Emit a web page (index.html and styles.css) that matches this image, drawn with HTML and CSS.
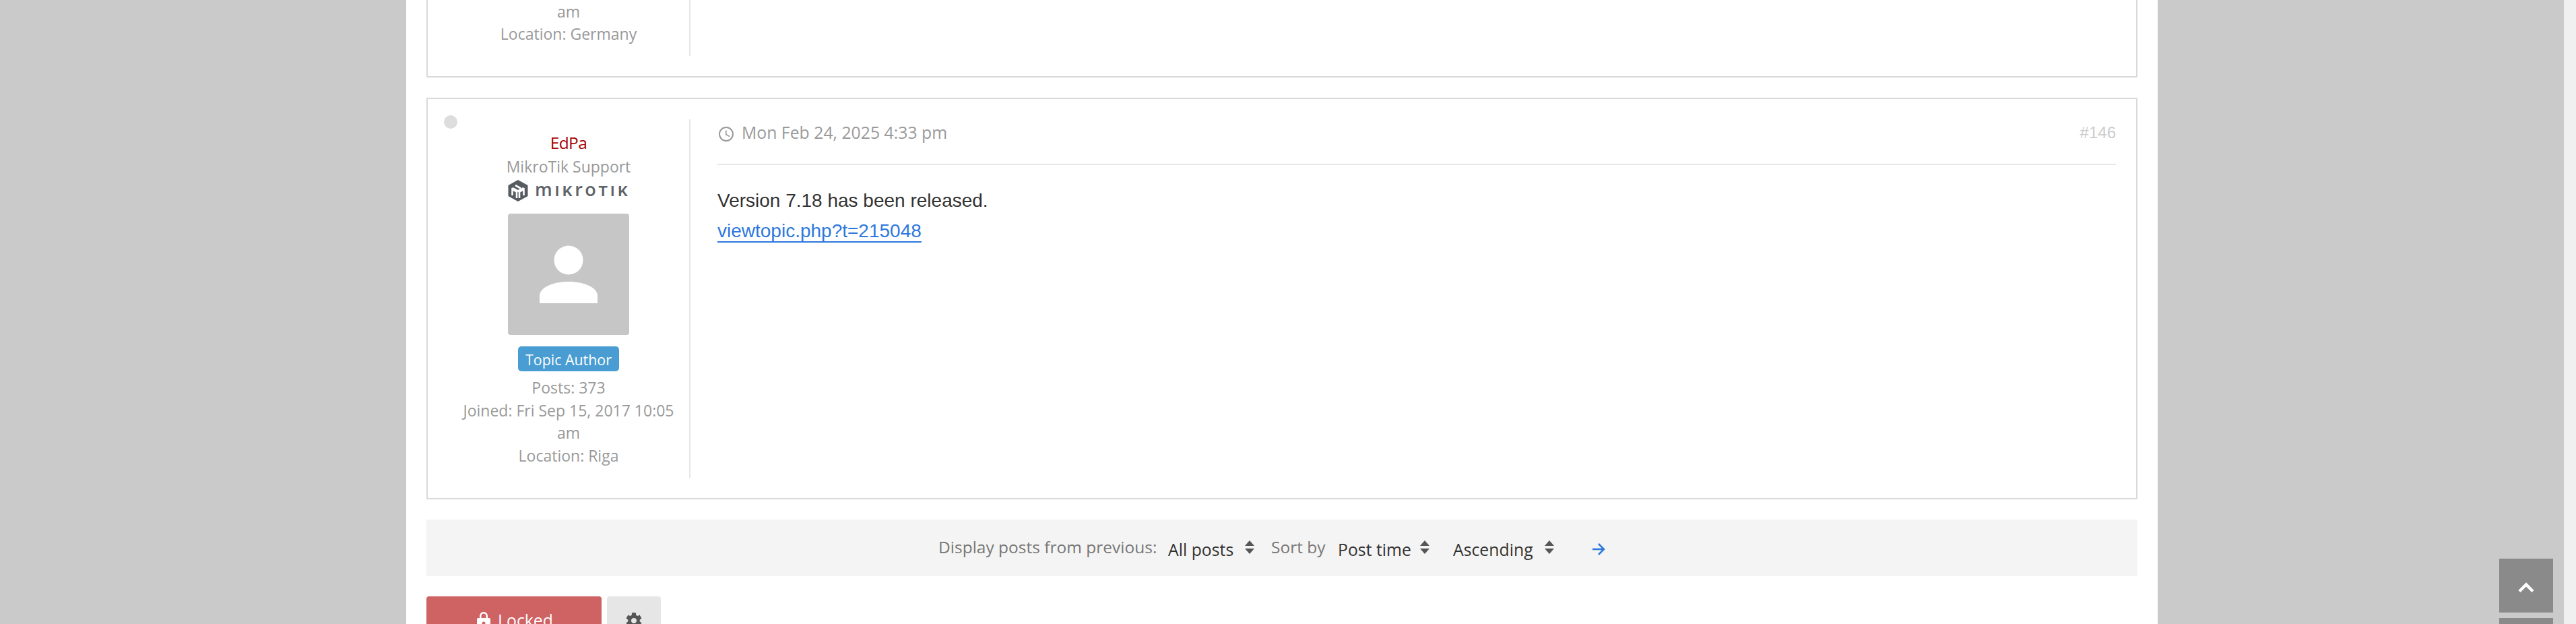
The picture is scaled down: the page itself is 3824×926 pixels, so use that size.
FILE: index.html
```html
<!DOCTYPE html>
<html lang="en">
<head>
    <meta charset="utf-8">
    <title>MikroTik community forum</title>
    <link rel="stylesheet" href="styles.css">
</head>
<body>
<div class="page">
    <div class="wrap">

        <div class="post post-prev">
            <div class="profile">
                <div>am</div>
                <div>Location: Germany</div>
            </div>
        </div>

        <div class="post">
            <span class="status"></span>
            <div class="profile">
                <a class="username">EdPa</a>
                <div class="rank">MikroTik Support</div>
                <div class="logo">
                    <svg width="30" height="32" viewBox="0 0 30 32">
                        <path fill="#555b60" d="M15 0L29.500 8V24L15 32L0.500 24V8Z"/>
                        <path fill="none" stroke="#fff" stroke-width="2.600" d="M6.500 23V14L13 17.500V27M17 27V17.500L23.500 14V23M6.500 12L15 16.500L23.500 12M11 8L19 12.500"/>
                    </svg>
                    <span class="logo-text"><span>m</span><span>ı</span><span>ĸ</span><span>r</span><span>o</span><span>т</span><span>ı</span><span>ĸ</span></span>
                </div>
                <div class="avatar">
                    <svg width="180" height="180" viewBox="0 0 180 180" fill="#fff">
                        <circle cx="90" cy="69" r="21.500"/>
                        <path d="M47 133V122C47 110 66 101 90 101S133 110 133 122V133Z"/>
                    </svg>
                </div>
                <div class="badge">Topic Author</div>
                <div>Posts: 373</div>
                <div>Joined: Fri Sep 15, 2017 10:05 am</div>
                <div>Location: Riga</div>
            </div>
            <div class="postbody">
                <div class="post-head">
                    <svg class="clock" width="24" height="24" viewBox="0 0 24 24" fill="none" stroke="#999" stroke-width="2">
                        <circle cx="12" cy="12" r="10"/>
                        <path stroke-width="1.600" d="M11.800 6.500V12.500L17 15.500"/>
                    </svg>
                    <span>Mon Feb 24, 2025 4:33 pm</span>
                    <a class="number">#146</a>
                </div>
                <div class="content">
                    Version 7.18 has been released.<br>
                    <a>viewtopic.php?t=215048</a>
                </div>
            </div>
        </div>

        <form class="sortbar">
            <label class="l-display">Display posts from previous:</label>
            <span class="select s-all">All posts</span>
            <svg class="caret" width="14" height="20" viewBox="0 0 14 20"><path d="M0 8L7 0L14 8ZM0 12L7 20L14 12Z"/></svg>
            <label class="l-sort">Sort by</label>
            <span class="select s-time">Post time</span>
            <svg class="caret" width="14" height="20" viewBox="0 0 14 20"><path d="M0 8L7 0L14 8ZM0 12L7 20L14 12Z"/></svg>
            <span class="select s-dir">Ascending</span>
            <svg class="caret" width="14" height="20" viewBox="0 0 14 20"><path d="M0 8L7 0L14 8ZM0 12L7 20L14 12Z"/></svg>
            <svg class="go" width="20" height="20" viewBox="0 0 20 20"><path d="M1 10H18M10 2L18 10L10 18"/></svg>
        </form>

        <div class="actions">
            <a class="button locked">
                <svg width="20" height="27" viewBox="0 0 20 27"><path fill="#fff" fill-rule="evenodd" d="M2 9H4V6A6 6 0 0 1 16 6V9H18A2 2 0 0 1 20 11V24A2 2 0 0 1 18 26H2A2 2 0 0 1 0 24V11A2 2 0 0 1 2 9ZM6.500 9H13.500V6A3.500 3.500 0 0 0 6.500 6ZM10 14.500A2.500 2.500 0 1 0 10 19.500A2.500 2.500 0 1 0 10 14.500Z"/></svg>
                <span>Locked</span>
            </a>
            <a class="button tools">
                <svg width="28" height="28" viewBox="0 0 24 24"><path fill="#555" d="M19.430 12.980c.04-.32.070-.640.070-.980s-.030-.660-.070-.980l2.110-1.650c.190-.150.240-.420.120-.640l-2-3.460c-.120-.220-.390-.300-.610-.220l-2.490 1c-.520-.400-1.080-.730-1.690-.980l-.380-2.650C14.460 2.180 14.250 2 14 2h-4c-.250 0-.460.180-.490.420l-.380 2.650c-.610.250-1.170.590-1.690.980l-2.490-1c-.230-.090-.490 0-.610.220l-2 3.460c-.130.220-.070.490.120.640l2.110 1.650c-.040.320-.070.650-.070.980s.030.660.070.980l-2.110 1.650c-.190.150-.240.420-.120.640l2 3.460c.120.220.390.300.610.220l2.490-1c.520.400 1.080.730 1.690.980l.380 2.650c.030.240.240.420.490.420h4c.250 0 .460-.180.490-.420l.380-2.650c.610-.250 1.170-.590 1.690-.980l2.490 1c.230.090.490 0 .610-.220l2-3.460c.120-.220.070-.490-.120-.640l-2.110-1.650zM12 15.500c-1.930 0-3.500-1.570-3.500-3.500s1.570-3.500 3.500-3.500 3.500 1.570 3.500 3.500-1.570 3.500-3.500 3.500z"/></svg>
            </a>
        </div>
    </div>

    <div class="jump">
        <a><svg width="24" height="16" viewBox="0 0 24 16"><path d="M2 13.500L12 3.500L22 13.500"/></svg></a>
        <a></a>
    </div>
</div>
</body>
</html>
```

FILE: styles.css
```css
html, body {
    margin: 0;
    padding: 0;
    height: 926px;
    overflow: hidden;
}
body {
    background: #f0f0f0;
    font-family: "Open Sans", sans-serif;
    font-size: 24.8px;
    color: #999;
}
.page {
    width: 3806px;
    height: 926px;
    background: #cacaca;
    overflow: hidden;
}
.wrap {
    box-sizing: border-box;
    width: 2600px;
    height: 926px;
    margin: 0 auto;
    padding: 0 30px;
    background: #fff;
    overflow: hidden;
}

.post {
    position: relative;
    box-sizing: border-box;
    display: flex;
    height: 596px;
    margin-bottom: 30px;
    padding: 30px;
    border: 2px solid #d9d9d9;
}
.post-prev {
    height: 115px;
    padding-top: 0;
    border-top: 0;
}
.status {
    position: absolute;
    left: 24px;
    top: 24px;
    width: 20px;
    height: 20px;
    border-radius: 50%;
    background: #ddd;
}
.profile {
    box-sizing: border-box;
    width: 360px;
    padding: 16px 15px 0;
    border-right: 2px solid #e6e6e6;
    font-size: 23px;
    line-height: 33.6px;
    text-align: center;
}
.post-prev .profile {
    padding-top: .5px;
}
.username {
    display: block;
    color: #a00;
    font-size: 24.5px;
    line-height: 37px;
    letter-spacing: -.6px;
}
.rank {
    line-height: 34px;
}
.logo {
    display: flex;
    align-items: center;
    width: 180px;
    height: 32px;
    margin: 3px auto 18px;
}
.logo-text {
    display: flex;
    justify-content: space-between;
    width: 138px;
    margin: -4px 0 0 10px;
    color: #5d6368;
    font-family: "Open Sans", sans-serif;
    font-size: 27px;
    font-weight: 600;
    line-height: 32px;
}
.avatar {
    width: 180px;
    height: 180px;
    margin: 0 auto 17px;
    border-radius: 4px;
    background: #c6c6c6;
}
.avatar svg {
    display: block;
}
.badge {
    width: 150px;
    height: 37px;
    margin: 0 auto 8px;
    border-radius: 5px;
    background: #4a9dd3;
    color: #fff;
    font-size: 21.4px;
    line-height: 40px;
}

.postbody {
    flex: 1;
    margin-left: 40px;
}
.post-head {
    box-sizing: border-box;
    display: flex;
    align-items: center;
    height: 68px;
    padding-bottom: 28px;
    border-bottom: 2px solid #e6e6e6;
}
.clock {
    margin: 6px 11px 0 1px;
}
.number {
    margin: 1px 0 0 auto;
    color: #ccc;
    font-family: "Liberation Sans", Arial, sans-serif;
    font-size: 24px;
}
.content {
    padding-top: 30px;
    color: #333;
    font-family: "Liberation Sans", Arial, sans-serif;
    font-size: 28px;
    line-height: 45px;
}
.content a {
    color: #2d78dd;
    border-bottom: 2px solid #2d78dd;
}

.sortbar {
    display: flex;
    align-items: center;
    height: 84px;
    padding-left: 760px;
    background: #f4f4f4;
    color: #777;
    white-space: nowrap;
}
.sortbar label {
    margin-top: -4px;
    font-size: 24.5px;
}
.l-display { width: 341px; }
.l-sort { width: 99px; }
.select {
    padding-top: 4px;
    color: #333;
}
.s-all { width: 114px; }
.s-time { width: 122px; }
.s-dir { width: 136px; }
.caret {
    margin: -2px 25px 0 0;
    fill: #555;
}
.s-time + .caret {
    margin-right: 35px;
}
.go {
    margin: 4px 0 0 31px;
    fill: none;
    stroke: #2d78dd;
    stroke-width: 2.5;
}

.actions {
    display: flex;
    gap: 8px;
    margin-top: 30px;
}
.button {
    box-sizing: border-box;
    display: flex;
    align-items: center;
    justify-content: center;
    height: 72px;
    border-radius: 4px;
}
.locked {
    width: 260px;
    padding-left: 3px;
    background: #cf6262;
    color: #fff;
}
.locked span {
    margin: -3px 0 0 11px;
}
.tools {
    width: 80px;
    background: #e6e6e6;
}

/* jump buttons float over the page edge */
.jump {
    position: absolute;
    left: 3710px;
    top: 829px;
    height: 97px;
    overflow: hidden;
}
.jump a {
    display: flex;
    align-items: center;
    justify-content: center;
    width: 80px;
    height: 80px;
    margin-bottom: 8px;
    background: #8a8a8a;
}
.jump svg {
    margin-top: 6px;
    fill: none;
    stroke: #fff;
    stroke-width: 4.5;
}
```
